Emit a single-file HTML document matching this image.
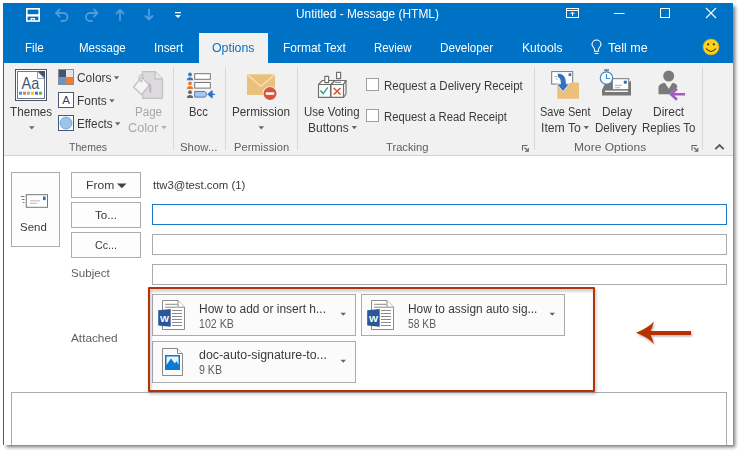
<!DOCTYPE html>
<html><head><meta charset="utf-8"><title>Untitled - Message (HTML)</title>
<style>
html,body{margin:0;padding:0;background:#fff;}
body{width:740px;height:456px;overflow:hidden;position:relative;font-family:"Liberation Sans",sans-serif;}
.abs{position:absolute;box-sizing:border-box;}
.t{position:absolute;white-space:pre;line-height:1;transform-origin:0 0;}
#win{left:3px;top:3px;width:730px;height:442px;background:#fff;box-shadow:2.5px 2.5px 3.5px rgba(0,0,0,.52);}
#blue{left:3px;top:3px;width:730px;height:59.5px;background:#0072c6;}
#tab{left:199px;top:33px;width:69px;height:31px;background:#f1f1f1;}
#ribbon{left:3px;top:62.5px;width:730px;height:93.5px;background:#f1f1f1;border-bottom:1px solid #d2d2d2;}
#lb{left:3px;top:3px;width:1px;height:442px;background:#0072c6;}
.sep{width:1px;top:67px;height:83px;background:#d8d8d8;}
.btn{border:1px solid #acacac;background:#fdfdfd;}
.fld{border:1px solid #ababab;background:#fff;left:152px;width:575px;height:21px;}
.att{border:1px solid #ababab;background:#fbfbfb;height:42px;width:204px;}
.cb{width:13px;height:13px;left:366px;border:1px solid #9e9e9e;background:#fff;}
#svg{left:0;top:0;}
</style></head>
<body>
<div id="win" class="abs"></div>
<div id="blue" class="abs"></div>
<div id="ribbon" class="abs"></div>
<div id="tab" class="abs"></div>
<div class="abs sep" style="left:173px"></div>
<div class="abs sep" style="left:225px"></div>
<div class="abs sep" style="left:297px"></div>
<div class="abs sep" style="left:534px"></div>
<div class="abs sep" style="left:702px"></div>
<div class="abs cb" style="top:78px"></div>
<div class="abs cb" style="top:109px"></div>

<!-- message area -->
<div class="abs btn" style="left:11px;top:172px;width:49px;height:74.5px"></div>
<div class="abs btn" style="left:71px;top:172px;width:70px;height:25.5px"></div>
<div class="abs btn" style="left:71px;top:202px;width:70px;height:25.5px"></div>
<div class="abs btn" style="left:71px;top:232px;width:70px;height:25.5px"></div>
<div class="abs fld" style="top:204px;border-color:#1479cf"></div>
<div class="abs fld" style="top:234px"></div>
<div class="abs fld" style="top:264px"></div>
<div class="abs" style="left:11px;top:392px;width:716px;height:53px;border:1px solid #ababab;border-bottom:none;background:#fff"></div>
<div class="abs" style="left:148px;top:287px;width:446.5px;height:105px;background:#fff"></div>
<div class="abs att" style="left:152px;top:294px"></div>
<div class="abs att" style="left:361px;top:294px"></div>
<div class="abs att" style="left:152px;top:341px"></div>
<div class="abs" style="left:148px;top:287px;width:446.5px;height:105px;border:2px solid #b5330b;border-radius:1px;background:transparent;filter:drop-shadow(1px 2px 1.5px rgba(0,0,0,.3))"></div>
<div id="lb" class="abs"></div>

<svg id="svg" class="abs" width="740" height="456" viewBox="0 0 740 456">
<!-- title bar: save -->
<g fill="none" stroke="#fff" stroke-width="1.600">
<rect x="26.800" y="8.800" width="12.400" height="12.200"/>
<path d="M27 15.400H39" stroke-width="2.400"/>
<path d="M31.200 21V18.700H34.300V21" stroke-width="1.300"/>
</g>
<!-- undo / redo / up / down -->
<g fill="none" stroke="#4f9bd9" stroke-width="1.800" stroke-linecap="round" stroke-linejoin="round">
<path d="M59.5 9.5L56 13L59.5 16.5M56.5 13H63.5A4 4 0 0 1 63.5 21H61.5"/>
<path d="M94 9.5L97.500 13L94 16.5M97 13H90A4 4 0 0 0 90 21H92"/>
<path d="M120 20V10M116.500 13.500L120 10L123.500 13.500"/>
<path d="M149 9.500V19.500M145.500 16L149 19.500L152.500 16"/>
</g>
<!-- customize QAT -->
<path d="M175 12H181V13.300H175ZM175 15H181L178 18Z" fill="#fff"/>
<!-- ribbon display options -->
<g fill="none" stroke="#fff" stroke-width="1">
<rect x="566.500" y="8.500" width="12" height="9"/>
<path d="M566.500 10.500H578.500" />
<path d="M572.500 16V12M570.500 14L572.500 12L574.500 14"/>
</g>
<!-- min / max / close -->
<path d="M614 13.500H624.500" stroke="#fff" stroke-width="1"/>
<rect x="660.500" y="8.500" width="9" height="9" fill="none" stroke="#fff" stroke-width="1"/>
<path d="M706 8L716 18M716 8L706 18" stroke="#fff" stroke-width="1.100"/>
<!-- bulb -->
<g fill="none" stroke="#fff" stroke-width="1.100">
<path d="M594.500 51.300V49.500C594.500 47.500 592 46.500 592 44.500A4.500 4.500 0 0 1 601 44.500C601 46.500 598.500 47.500 598.500 49.500V51.300Z"/>
<path d="M594.500 53.500H598.500"/>
</g>
<!-- smiley -->
<circle cx="711" cy="47" r="8" fill="#ffd21f" stroke="#c9a000" stroke-width=".6"/>
<circle cx="708.200" cy="44.300" r="1.100" fill="#3a3000"/>
<circle cx="713.800" cy="44.300" r="1.100" fill="#3a3000"/>
<path d="M706 48.500Q711 54.500 716 48.500" fill="none" stroke="#3a3000" stroke-width="1.100"/>

<!-- Themes icon -->
<rect x="15.500" y="69.500" width="31" height="31" fill="#fff" stroke="#4d5666"/>
<rect x="17.500" y="71.500" width="27" height="27" fill="#fff" stroke="#6b7890"/>
<path d="M37.500 71H45V78.500Z" fill="#44546a"/>
<path d="M37.500 71.500V78.500H44.500Z" fill="#fff" stroke="#6b7890" stroke-width=".7"/>
<text x="21.500" y="89.300" font-family="Liberation Sans, sans-serif" font-size="17" fill="#3e5577" textLength="17.700" lengthAdjust="spacingAndGlyphs">Aa</text>
<g>
<rect x="19" y="91.700" width="3" height="3" fill="#4a90d9"/>
<rect x="23" y="91.700" width="3" height="3" fill="#ed7d31"/>
<rect x="27" y="91.700" width="3" height="3" fill="#a5a5a5"/>
<rect x="31" y="91.700" width="3" height="3" fill="#ffc000"/>
<rect x="35" y="91.700" width="3" height="3" fill="#4472c4"/>
<rect x="39" y="91.700" width="3" height="3" fill="#70ad47"/>
</g>
<!-- Colors -->
<rect x="58" y="69" width="8" height="8" fill="#44546a"/>
<rect x="66" y="69" width="8" height="8" fill="#e4e4e4"/>
<rect x="58" y="77" width="8" height="8" fill="#5b9bd5"/>
<rect x="66" y="77" width="8" height="8" fill="#ed7d31"/>
<rect x="58.500" y="69.500" width="15" height="15" fill="none" stroke="#8d8d8d" stroke-width="1"/>
<!-- Fonts -->
<rect x="58.500" y="92.500" width="15" height="15" fill="#fff" stroke="#4a5870"/>
<text x="62.200" y="104.300" font-family="Liberation Sans, sans-serif" font-size="11.500" fill="#3a3f5c">A</text>
<!-- Effects -->
<rect x="58.500" y="115.500" width="15" height="15" fill="#fff" stroke="#4a5870"/>
<circle cx="66" cy="123" r="6" fill="#9cc3ea" stroke="#5f9fdb" stroke-width=".8"/>
<!-- small dropdown arrows -->
<g fill="#666">
<path d="M113.8 76.2H119.2L116.50 79.5Z"/>
<path d="M109.2 99.2H114.6L111.90 102.5Z"/>
<path d="M115.0 122.2H120.4L117.70 125.5Z"/>
<path d="M351.6 126.0H357.0L354.30 129.3Z"/>
<path d="M583.6 126.0H589.0L586.30 129.3Z"/>
<path d="M258.5 126.2H264.1L261.30 129.5Z"/>
<path d="M29.0 126.2H34.6L31.80 129.5Z"/>
</g>
<g fill="#b0b0b0"><path d="M161.3 126.0H166.7L164.00 129.3Z"/></g>

<!-- Page Color (disabled) -->
<g stroke="#c4c0c4" stroke-width="1.300" stroke-linejoin="round">
<path d="M142.500 71.700H155L162.500 79V98.300H142.500Z" fill="#dddadd"/>
<path d="M155 71.700V79H162.500" fill="#ecebec"/>
<path d="M133.500 87L141.500 77.500L149.500 85L141.500 94.500Z" fill="#f6f5f6"/>
<path d="M139.300 80C138 74.500 143 72.500 143.300 79" fill="none" stroke-width="1.200"/>
<path d="M148.500 84C151.500 85.500 150 89.500 150.300 92.500" fill="none" stroke="#b9b5b9" stroke-width="2"/>
</g>
<circle cx="141.300" cy="81" r="1.300" fill="#c4c0c4"/>

<!-- Bcc icon -->
<g>
<circle cx="190" cy="74.500" r="1.900" fill="#3b78c2"/>
<path d="M186.800 80.200C186.800 76.200 193.200 76.200 193.200 80.200Z" fill="#3b78c2"/>
<circle cx="190" cy="83.300" r="1.900" fill="#e8792a"/>
<path d="M186.800 89C186.800 85 193.200 85 193.200 89Z" fill="#e8792a"/>
<circle cx="190" cy="92.200" r="1.900" fill="#666"/>
<path d="M186.800 97.900C186.800 93.900 193.200 93.900 193.200 97.900Z" fill="#666"/>
<rect x="194.700" y="73.700" width="15.600" height="5.600" fill="#fff" stroke="#777" stroke-width="1"/>
<rect x="194.700" y="82.500" width="15.600" height="5.600" fill="#fff" stroke="#777" stroke-width="1"/>
<path d="M194.700 91.500H205L207 94.300L205 97.100H194.700Z" fill="#a9c7ea" stroke="#4a7fc1" stroke-width="1"/>
<path d="M215 94.300H210M212 91L208.300 94.300L212 97.600Z" fill="#2f6fbe" stroke="#2f6fbe" stroke-width="1.300" stroke-linejoin="round"/>
</g>

<!-- Permission -->
<rect x="247" y="74.300" width="28" height="20.700" fill="#ebc07a"/>
<path d="M247 74.300L261 86.500L275 74.300" fill="none" stroke="#f7e4bf" stroke-width="1.300"/>
<circle cx="270" cy="93.500" r="7.300" fill="#f1f1f1"/>
<circle cx="270" cy="93.500" r="6.500" fill="#d9553a"/>
<rect x="265.800" y="92.300" width="8.400" height="2.500" fill="#fff"/>

<!-- Voting -->
<g stroke="#6e6e6e" stroke-width="1.150" fill="#fdfdfd" stroke-linejoin="round">
<path d="M318.500 84.500L322.500 80.500H335L331 84.500Z"/>
<path d="M331 84.500L335 80.500H346L343.500 84.500Z"/>
<path d="M343.500 84.500L346 80.500V94L343.500 97.300Z"/>
<rect x="318.500" y="84.500" width="12" height="12.800"/>
<rect x="331" y="84.500" width="12.500" height="12.800"/>
<rect x="324.800" y="76.400" width="3.800" height="6.200"/>
<rect x="336.600" y="72.400" width="4" height="6.200"/>
<path d="M335 82.300H341" fill="none" stroke-width="1"/>
</g>
<path d="M320.300 90.500L323.200 93.600L327.800 87.300" fill="none" stroke="#3c9e8a" stroke-width="1.400"/>
<path d="M333.700 88L340.500 94.500M340.500 88L333.700 94.500" fill="none" stroke="#d9532c" stroke-width="1.600"/>

<!-- launchers -->
<g fill="none" stroke="#666" stroke-width="1.100">
<path d="M527.500 145.500H522.500V150.500"/>
<path d="M528 151L524.500 147.500M528.300 148V151.300H525" />
<path d="M697 145.500H692V150.500"/>
<path d="M697.500 151L694 147.500M697.800 148V151.300H694.500" />
</g>
<!-- collapse chevron -->
<path d="M715.300 149.200L719.500 145L723.700 149.200" fill="none" stroke="#5a5a5a" stroke-width="1.900"/>

<!-- Save Sent Item To -->
<rect x="551.700" y="71.600" width="21" height="12.500" fill="#fff" stroke="#777"/>
<rect x="568.600" y="73.300" width="2.600" height="2.800" fill="#2f6fbe"/>
<path d="M554.500 76.500H557.500M555.500 79H557.500" stroke="#999" stroke-width=".8"/>
<path d="M557.300 85H569.500L571 82.400H579V98.700H557.300Z" fill="#ebc07a"/>
<path d="M557.500 73.300C564 73.300 566.300 77.500 566.300 84H569.300L563 91.500L556.700 84H560.500C560.500 79.500 559.500 77.500 557.500 77Z" fill="#2f72c0" stroke="#f1f1f1" stroke-width=".8"/>

<!-- Delay Delivery -->
<path d="M602 90L605.500 82.500H612V90Z" fill="#777"/>
<path d="M627 90V82.500L631 81V90Z" fill="#777"/>
<rect x="612.400" y="78.700" width="16.400" height="11" fill="#fff" stroke="#777"/>
<rect x="623.800" y="80.700" width="3" height="3" fill="#2f6fbe"/>
<path d="M615 85.300H622M615 87.700H620" stroke="#999" stroke-width=".8"/>
<path d="M602 89.500H631V95.500H602Z" fill="#777"/>
<path d="M605 90.600H628V92H605Z" fill="#f4f4f4"/>
<path d="M604 70H609M606.500 70V72" stroke="#777" stroke-width="1.500"/>
<circle cx="606.500" cy="78" r="6.200" fill="#fff" stroke="#3f8ad4" stroke-width="1.300"/>
<path d="M606.500 74V78.500H610" fill="none" stroke="#3f8ad4" stroke-width="1.200"/>

<!-- Direct Replies To -->
<circle cx="668.700" cy="76" r="5.500" fill="#7a7a7a"/>
<path d="M658.500 94.300V88C658.500 84.500 661.500 83 665 83L668.700 88.800L672.400 83C675 83 677.300 84.500 677.300 87L669 94.300Z" fill="#7a7a7a"/>
<path d="M685 94.300H672M677 88.800L671 94.300L677 99.800" fill="none" stroke="#a25bc2" stroke-width="2.600"/>

<!-- Send icon -->
<rect x="26.300" y="194.700" width="21.200" height="12.600" fill="#fff" stroke="#777" stroke-width="1"/>
<rect x="43" y="196.500" width="2.600" height="3.600" fill="#2f6fbe"/>
<path d="M30 200.800H40M30 203.300H37" stroke="#aaa" stroke-width=".8"/>
<path d="M20.800 196.500H24.500M21.800 199.500H24.500M22.800 202.500H24.500" stroke="#777" stroke-width="1"/>
<!-- From arrow -->
<path d="M117 183.400H126.600L121.800 188.200Z" fill="#444"/>

<!-- attachment dropdown arrows -->
<g fill="#666">
<path d="M340.500 312.700H346L343.250 315.700Z"/>
<path d="M549.500 312.700H555L552.250 315.700Z"/>
<path d="M340.500 359.700H346L343.250 362.700Z"/>
</g>
<!-- word icons -->
<g id="wd">
<path d="M162.500 300.500H178L184.500 307.200V329.500H162.500Z" fill="#fff" stroke="#8a8a8a" stroke-width="1"/>
<path d="M178 300.500V307.200H184.500" fill="#fff" stroke="#8a8a8a" stroke-width="1"/>
<path d="M165 304.300H177.500M165 307.200H177.500M172 310.500H182M172 313.500H182M172 316.500H182M172 319.500H182M172 322.500H182M172 325.500H182" stroke="#8a8a8a" stroke-width="1"/>
<path d="M158.200 310.300L170.700 308.900V326.800L158.200 325.600Z" fill="#2b579a"/>
<text x="160" y="321.500" font-family="Liberation Sans, sans-serif" font-weight="bold" font-size="9.500" fill="#fff" textLength="9" lengthAdjust="spacingAndGlyphs">W</text>
</g>
<use href="#wd" x="209" y="0"/>
<!-- image icon -->
<path d="M162.500 348.500H177.500L182.500 353.500V375.500H162.500Z" fill="#fafafa" stroke="#8a8a8a" stroke-width="1"/>
<path d="M177.500 348.500V353.500H182.500" fill="#fff" stroke="#8a8a8a" stroke-width="1"/>
<rect x="165.500" y="355.500" width="14" height="14" fill="#0a78d7" stroke="#0a78d7"/>
<path d="M166.500 356.500H178.500V365L176.500 361L174.800 363.500L171 358.500L166.500 365Z" fill="#eaf3fc"/>

<!-- red arrow -->
<g filter="url(#sh)">
<path d="M636 332.800C644 329.500 650 326 653.800 321.500C652.800 326 651.800 329 650.500 331H691V335H650.500C651.800 337 652.800 340 653.800 344C650 339.500 644 336 636 332.800Z" fill="#b83200"/>
</g>
<defs><filter id="sh" x="-10%" y="-20%" width="130%" height="160%"><feDropShadow dx="1" dy="1.500" stdDeviation="1" flood-color="#000" flood-opacity=".3"/></filter></defs>

</svg>
<span class="t" style="left:295.50px;top:7.8px;font-size:12px;color:#fff;transform:scaleX(0.9920)">Untitled - Message (HTML)</span>
<span class="t" style="left:24.70px;top:41.9px;font-size:12px;color:#fff;transform:scaleX(0.9667)">File</span>
<span class="t" style="left:78.70px;top:41.9px;font-size:12px;color:#fff;transform:scaleX(0.9589)">Message</span>
<span class="t" style="left:153.70px;top:41.9px;font-size:12px;color:#fff;transform:scaleX(0.9728)">Insert</span>
<span class="t" style="left:211.70px;top:41.9px;font-size:12px;color:#106ebe;transform:scaleX(1.0276)">Options</span>
<span class="t" style="left:282.50px;top:41.9px;font-size:12px;color:#fff;transform:scaleX(0.9962)">Format Text</span>
<span class="t" style="left:373.70px;top:41.9px;font-size:12px;color:#fff;transform:scaleX(0.9528)">Review</span>
<span class="t" style="left:439.70px;top:41.9px;font-size:12px;color:#fff;transform:scaleX(0.9725)">Developer</span>
<span class="t" style="left:521.70px;top:41.9px;font-size:12px;color:#fff;transform:scaleX(1.0117)">Kutools</span>
<span class="t" style="left:607.70px;top:41.9px;font-size:12px;color:#fff;transform:scaleX(1.0443)">Tell me</span>
<span class="t" style="left:10.20px;top:105.7px;font-size:12px;color:#3a3a3a;transform:scaleX(0.9733)">Themes</span>
<span class="t" style="left:76.60px;top:72.4px;font-size:12px;color:#3a3a3a;transform:scaleX(0.9946)">Colors</span>
<span class="t" style="left:76.60px;top:95.4px;font-size:12px;color:#3a3a3a;transform:scaleX(0.9928)">Fonts</span>
<span class="t" style="left:76.60px;top:118.4px;font-size:12px;color:#3a3a3a;transform:scaleX(0.9762)">Effects</span>
<span class="t" style="left:134.60px;top:105.7px;font-size:12px;color:#a8a8a8;transform:scaleX(0.9632)">Page</span>
<span class="t" style="left:128.40px;top:122.0px;font-size:12px;color:#a8a8a8;transform:scaleX(1.0597)">Color</span>
<span class="t" style="left:188.90px;top:105.7px;font-size:12px;color:#3a3a3a;transform:scaleX(0.9393)">Bcc</span>
<span class="t" style="left:231.80px;top:105.7px;font-size:12px;color:#3a3a3a;transform:scaleX(0.9771)">Permission</span>
<span class="t" style="left:304.10px;top:105.7px;font-size:12px;color:#3a3a3a;transform:scaleX(0.9578)">Use Voting</span>
<span class="t" style="left:308.00px;top:122.0px;font-size:12px;color:#3a3a3a;transform:scaleX(0.9999)">Buttons</span>
<span class="t" style="left:383.50px;top:80.4px;font-size:12px;color:#3a3a3a;transform:scaleX(0.9539)">Request a Delivery Receipt</span>
<span class="t" style="left:383.50px;top:111.4px;font-size:12px;color:#3a3a3a;transform:scaleX(0.9400)">Request a Read Receipt</span>
<span class="t" style="left:539.50px;top:105.7px;font-size:12px;color:#3a3a3a;transform:scaleX(0.9120)">Save Sent</span>
<span class="t" style="left:540.60px;top:122.0px;font-size:12px;color:#3a3a3a;transform:scaleX(1.0168)">Item To</span>
<span class="t" style="left:601.60px;top:105.7px;font-size:12px;color:#3a3a3a;transform:scaleX(0.9809)">Delay</span>
<span class="t" style="left:595.00px;top:122.0px;font-size:12px;color:#3a3a3a;transform:scaleX(0.9644)">Delivery</span>
<span class="t" style="left:652.90px;top:105.7px;font-size:12px;color:#3a3a3a;transform:scaleX(0.9954)">Direct</span>
<span class="t" style="left:641.70px;top:122.0px;font-size:12px;color:#3a3a3a;transform:scaleX(0.9568)">Replies To</span>
<span class="t" style="left:68.90px;top:141.8px;font-size:11px;color:#5e5e5e;transform:scaleX(0.9585)">Themes</span>
<span class="t" style="left:179.50px;top:141.8px;font-size:11px;color:#5e5e5e;transform:scaleX(1.0366)">Show...</span>
<span class="t" style="left:233.80px;top:141.8px;font-size:11px;color:#5e5e5e;transform:scaleX(1.0128)">Permission</span>
<span class="t" style="left:385.50px;top:141.8px;font-size:11px;color:#5e5e5e;transform:scaleX(1.0172)">Tracking</span>
<span class="t" style="left:573.80px;top:141.8px;font-size:11px;color:#5e5e5e;transform:scaleX(1.0934)">More Options</span>
<span class="t" style="left:19.60px;top:221.9px;font-size:11px;color:#3a3a3a;transform:scaleX(1.0427)">Send</span>
<span class="t" style="left:85.60px;top:179.5px;font-size:11px;color:#3a3a3a;transform:scaleX(1.0985)">From</span>
<span class="t" style="left:94.70px;top:210.3px;font-size:11px;color:#3a3a3a;transform:scaleX(1.0579)">To...</span>
<span class="t" style="left:94.70px;top:240.3px;font-size:11px;color:#3a3a3a;transform:scaleX(0.9724)">Cc...</span>
<span class="t" style="left:70.60px;top:268.3px;font-size:11px;color:#5e5e5e;transform:scaleX(1.0571)">Subject</span>
<span class="t" style="left:152.50px;top:179.7px;font-size:11px;color:#3a3a3a;transform:scaleX(1.0333)">ttw3@test.com (1)</span>
<span class="t" style="left:70.60px;top:332.9px;font-size:11px;color:#5e5e5e;transform:scaleX(1.0709)">Attached</span>
<span class="t" style="left:199.00px;top:302.9px;font-size:12px;color:#3a3a3a;transform:scaleX(0.9968)">How to add or insert h...</span>
<span class="t" style="left:198.90px;top:318.4px;font-size:12px;color:#5e5e5e;transform:scaleX(0.8838)">102 KB</span>
<span class="t" style="left:408.00px;top:302.9px;font-size:12px;color:#3a3a3a;transform:scaleX(0.9898)">How to assign auto sig...</span>
<span class="t" style="left:407.90px;top:318.4px;font-size:12px;color:#5e5e5e;transform:scaleX(0.8562)">58 KB</span>
<span class="t" style="left:199.00px;top:349.2px;font-size:12px;color:#3a3a3a;transform:scaleX(1.0308)">doc-auto-signature-to...</span>
<span class="t" style="left:198.90px;top:364.4px;font-size:12px;color:#5e5e5e;transform:scaleX(0.8841)">9 KB</span>
</body></html>
